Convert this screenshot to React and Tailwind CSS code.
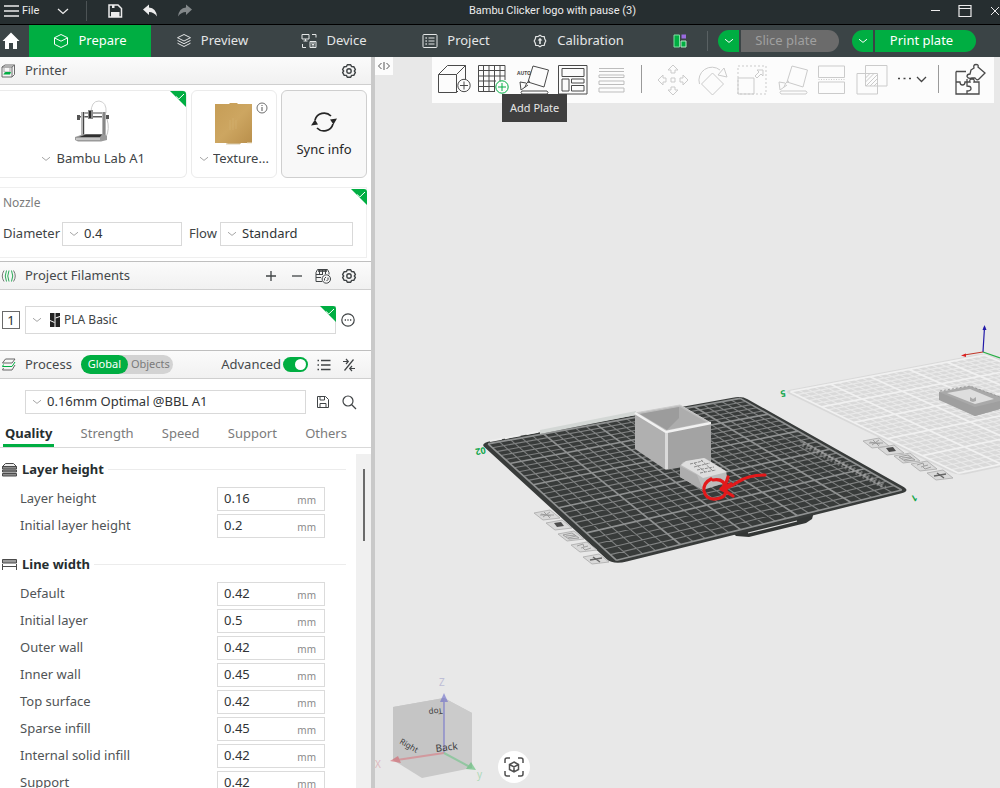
import { useState } from "react";
import clsx from "clsx";

const TABS = ["Prepare", "Preview", "Device", "Project", "Calibration"];
const PROCESS_TABS = ["Quality", "Strength", "Speed", "Support", "Others"];

const GROUPS = [
	{
		title: "Layer height",
		icon: "layers",
		fields: [
			["Layer height", "0.16"],
			["Initial layer height", "0.2"],
		],
	},
	{
		title: "Line width",
		icon: "line",
		fields: [
			["Default", "0.42"],
			["Initial layer", "0.5"],
			["Outer wall", "0.42"],
			["Inner wall", "0.45"],
			["Top surface", "0.42"],
			["Sparse infill", "0.45"],
			["Internal solid infill", "0.42"],
			["Support", "0.42"],
		],
	},
];

/* ---------- small icons ---------- */

const Svg = ({ size = 16, className, children, ...rest }) => (
	<svg
		width={size}
		height={size}
		viewBox={`0 0 ${size} ${size}`}
		fill="none"
		stroke="currentColor"
		className={clsx("shrink-0", className)}
		aria-hidden="true"
		{...rest}
	>
		{children}
	</svg>
);

const Chevron = ({ className }) => (
	<svg width="10" height="6" viewBox="0 0 10 6" fill="none" stroke="currentColor" className={clsx("shrink-0", className)}>
		<path d="M1 1.2 L5 4.4 L9 1.2" />
	</svg>
);

const GearIcon = () => (
	<Svg strokeWidth="1.4">
		<path d="M6.3 1.8 H9.7 L10.6 3.6 L12.8 3.7 L14.4 6.6 L13.3 8 L14.4 9.4 L12.8 12.3 L10.6 12.4 L9.7 14.2 H6.3 L5.4 12.4 L3.2 12.3 L1.6 9.4 L2.7 8 L1.6 6.6 L3.2 3.7 L5.4 3.6 Z" strokeLinejoin="round" />
		<circle cx="8" cy="8" r="2.2" />
	</Svg>
);

const tabIcons = {
	Prepare: (
		<Svg>
			<path d="M8 1.5 L14.5 4.7 V11.3 L8 14.5 L1.5 11.3 V4.7 Z M1.5 4.9 L8 8.2 L14.5 4.9" />
		</Svg>
	),
	Preview: (
		<Svg>
			<path d="M8 1.5 L14.5 4.7 L8 8 L1.5 4.7 Z M1.5 7.4 L8 10.7 L14.5 7.4 M1.5 10.2 L8 13.5 L14.5 10.2" />
		</Svg>
	),
	Device: (
		<Svg>
			<path d="M1 1.5 H8 V6 H1 Z M4.5 6 V8 M2.5 8 H6.5 M11 1.5 H15 V4.5 M1.5 11 V14.5 H5 M9 8.5 H15 V14.5 H9 Z M11 8.5 V11.5 H13 V8.5 M10.5 13 H13.5" />
		</Svg>
	),
	Project: (
		<Svg>
			<rect x="1" y="1.5" width="14" height="13" rx="1" />
			<path d="M6.5 5 H12.5 M6.5 8 H12.5 M6.5 11 H12.5" />
			<path d="M3.5 5 H4.8 M3.5 8 H4.8 M3.5 11 H4.8" strokeWidth="1.4" />
		</Svg>
	),
	Calibration: (
		<Svg>
			<path d="M8 2.2 L9.8 3.5 L12.2 3.6 L12.8 6 L13.8 8 L12.8 10 L12.2 12.4 L9.8 12.5 L8 13.8 L6.2 12.5 L3.8 12.4 L3.2 10 L2.2 8 L3.2 6 L3.8 3.6 L6.2 3.5 Z" strokeWidth="1.2" />
			<path d="M8 11 V6.5" strokeWidth="1.6" />
			<path d="M5.6 7.6 L8 4.8 L10.4 7.6 Z" fill="currentColor" stroke="none" />
		</Svg>
	),
};

// Green corner with a tick that marks a synced card
const SyncedCorner = ({ className }) => (
	<svg width="16" height="16" viewBox="0 0 16 16" className={clsx("absolute", className)} aria-hidden="true">
		<path d="M0 0 H13 Q16 0 16 3 V16 Z" fill="#00ae42" />
		<path d="M6 5.5 L8.8 8 L14 3" fill="none" stroke="#fff" />
	</svg>
);

const PrinterPicture = () => (
	<svg width="36" height="44" viewBox="0 0 36 44" fill="none" aria-hidden="true">
		<path d="M16 14 Q16 2 24 2 Q32 3 31 14" stroke="#cfcfcf" strokeWidth="1" />
		<path d="M32 20 Q35 30 31 38" stroke="#c4c4c4" strokeWidth="1" />
		<path d="M7 13 H31 V15 H7 Z" fill="#a5a5a5" />
		<path d="M3 17 H33 V18.5 H3 Z" fill="#5b5b5b" />
		<path d="M6 13 H9.5 V37 H6 Z" fill="#b5b5b5" />
		<path d="M8 13 H9 V37 H8 Z" fill="#444" />
		<path d="M27 13 H31 V40 H27 Z" fill="#b5b5b5" />
		<path d="M28.5 13 H29.5 V39 H28.5 Z" fill="#5a5a5a" />
		<path d="M13 11 H18 V20 H13 Z" fill="#8a8a8a" />
		<path d="M14 12 H16 V19 H14 Z" fill="#2c2c2c" />
		<path d="M2 16 H5 V21 H2 Z M31 16 H34 V20 H31 Z" fill="#555" />
		<path d="M0 38 L9 35 H28 L32 37 V41 L26 42.5 H3 L0 41 Z" fill="#9a9a9a" />
		<path d="M4 38 L11 35.5 H27 L25 38 Z" fill="#2f2f2f" />
		<path d="M1 40 H25" stroke="#f0f0f0" />
	</svg>
);

const PlatePicture = () => (
	<svg width="40" height="43" viewBox="0 0 40 43" aria-hidden="true">
		<defs>
			<linearGradient id="gold" x1="0" y1="0" x2="1" y2="1">
				<stop offset="0" stopColor="#c69d56" />
				<stop offset="0.5" stopColor="#cda661" />
				<stop offset="1" stopColor="#b98f4b" />
			</linearGradient>
		</defs>
		<path d="M1 2 H15 L16 1 H23 L24 2 H38 V41 H27 L26 42 H14 L12 41 H1 Z" fill="url(#gold)" />
		<path d="M12 42 H26" stroke="#d9cdb2" />
		<path d="M33 41 H38" stroke="#efe4cc" />
		<path d="M16 18 V28 M19 16 V28 M22 18 V27" stroke="#d4b274" strokeWidth="0.6" />
	</svg>
);

/* ---------- sidebar ---------- */

const SectionHeader = ({ icon, title, children }) => (
	<div className="flex h-7 shrink-0 items-center border-b border-[#cfcfcf] bg-linear-to-b from-[#fbfbfb] to-[#f1f1f1] pr-3.5 pl-px text-[#45494b]">
		{icon}
		<h2 className="ml-2 text-[13px]">{title}</h2>
		{children}
	</div>
);

const IconButton = ({ label, className, children }) => (
	<button type="button" aria-label={label} title={label} className={clsx("flex items-center justify-center text-[#404446]", className)}>
		{children}
	</button>
);

const Picker = ({ id, label, value, className }) => (
	<div className={clsx("flex h-6 items-center border border-[#d9d9d9] bg-white pl-1.5", className)}>
		<Chevron className="text-[#a6a6a6]" />
		<select id={id} aria-label={label} className="ml-[5px] min-w-0 flex-1 appearance-none bg-transparent text-[13px] text-[#303436] outline-none">
			<option>{value}</option>
		</select>
	</div>
);

const PrinterSection = () => (
	<section>
		<SectionHeader
			title="Printer"
			icon={
				<Svg>
					<path d="M1 4 L4 2 H13.5 V11.5 L11 14 H1 Z M1 4 H11 V14 M11 4 L13.5 2" stroke="#6b6b6b" />
					<path d="M3 4 V9 H9 V4" stroke="#a9a9a9" />
					<path d="M2.5 11 L4.5 9 H10 L9 11.5 H2.5 Z" fill="#00ae42" stroke="none" />
				</Svg>
			}
		>
			<IconButton label="Printer settings" className="ml-auto">
				<GearIcon />
			</IconButton>
		</SectionHeader>

		<div className="mt-[5px] flex h-[88px] gap-1 pr-1">
			<div className="relative flex flex-1 flex-col items-center rounded-r-md border border-l-0 border-[#ebebeb] pt-2">
				<SyncedCorner className="top-0 right-0" />
				<PrinterPicture />
				<label className="mt-1.5 flex items-center gap-1.5 text-[13px] text-[#404446]">
					<Chevron className="text-[#a6a6a6]" />
					<select aria-label="Printer" className="appearance-none bg-transparent outline-none">
						<option>Bambu Lab A1</option>
					</select>
				</label>
			</div>
			<div className="relative flex w-[86px] flex-col items-center rounded-md border border-[#ebebeb] pt-[11px]">
				<PlatePicture />
				<Svg size={12} className="absolute top-[11px] right-2 text-[#707070]">
					<circle cx="6" cy="6" r="5" />
					<path d="M6 5 V9 M6 3 V4" strokeWidth="1.2" />
				</Svg>
				<label className="mt-1 flex items-center gap-1 text-[13px] text-[#404446]">
					<Chevron className="text-[#a6a6a6]" />
					<select aria-label="Plate type" className="appearance-none bg-transparent outline-none">
						<option>Texture...</option>
					</select>
				</label>
			</div>
			<button type="button" className="flex w-[86px] flex-col items-center justify-center gap-1 rounded-md border border-[#cfcfcf] bg-[#f8f8f8] text-[13px] text-[#262626]">
				<Svg size={28} strokeWidth="1.7">
					<path d="M5 12 A9.5 9.5 0 0 1 21 8 M23 16 A9.5 9.5 0 0 1 7 20" />
					<path d="M1 17.5 L5 11.5 L8 16.5 Z M20 11.5 L27 10.5 L23.5 16.5 Z" fill="currentColor" stroke="none" />
				</Svg>
				Sync info
			</button>
		</div>

		<div className="relative mt-[9px] mr-1 h-[71px] border border-l-0 border-[#efefef]">
			<SyncedCorner className="top-px -right-px" />
			<p className="mt-[7px] ml-[3px] text-xs text-[#7b7b7b]">Nozzle</p>
			<div className="mt-[11px] flex items-center pr-[13px] pl-[3px] text-[13px] text-[#404446]">
				<label htmlFor="diameter" className="w-[59px]">Diameter</label>
				<Picker id="diameter" value="0.4" className="w-[120px]" />
				<label htmlFor="flow" className="ml-[7px] w-[31px]">Flow</label>
				<Picker id="flow" value="Standard" className="min-w-0 flex-1" />
			</div>
		</div>
	</section>
);

const FilamentSection = () => (
	<section className="mt-[3px] border-t border-[#bfbfbf]">
		<SectionHeader
			title="Project Filaments"
			icon={
				<Svg>
					<path d="M3 2.5 Q-0.5 8 3 13.5 M12.5 2.5 Q16 8 12.5 13.5" stroke="#777" />
					<path d="M5.5 2.5 Q3 8 5.5 13.5 M8 2.5 Q5.5 8 8 13.5 M10.5 2.5 Q13 8 10.5 13.5" stroke="#2aa957" />
				</Svg>
			}
		>
			<div className="ml-auto flex items-center gap-[10px]">
				<IconButton label="Add filament">
					<Svg strokeWidth="1.3"><path d="M8 3 V13 M3 8 H13" /></Svg>
				</IconButton>
				<IconButton label="Remove filament">
					<Svg strokeWidth="1.3"><path d="M3 8 H13" /></Svg>
				</IconButton>
				<IconButton label="Sync AMS filaments">
					<Svg>
						<path d="M7 13.5 H1 V4.5 L2.5 1.5 H12.5 L14 4.5 V6.5 M1 6.5 H8 M4.5 2 V6 M7.5 2 V6 M10.5 2 V6 M1 9.5 H6" />
						<path d="M3 3 H12" strokeWidth="1.6" />
						<circle cx="11.3" cy="11" r="4.2" />
						<path d="M9.5 12.5 V10.5 L11 9 M13 9.5 V11.5 L11.5 13" />
					</Svg>
				</IconButton>
				<IconButton label="Filament settings">
					<GearIcon />
				</IconButton>
			</div>
		</SectionHeader>
		<div className="flex items-center pt-4 pr-[15px] pb-4 pl-0.5">
			<button type="button" className="size-[18px] border border-[#6a6a6a] text-[13px] leading-4 text-[#262e30]">1</button>
			<div className="relative ml-[5px] flex h-7 flex-1 items-center border border-[#d9d9d9] pl-1.5">
				<Chevron className="text-[#a6a6a6]" />
				<svg width="10" height="14" viewBox="0 0 10 14" className="ml-2" aria-hidden="true">
					<path d="M0 0 H4.5 V14 H0 Z M5.5 0 H10 V14 H5.5 Z" fill="#222" />
					<path d="M0 7.5 L4.5 9.5 M5.5 5 L10 3.5" stroke="#fff" />
				</svg>
				<select aria-label="Filament 1" className="ml-1 flex-1 appearance-none bg-transparent text-xs text-[#404446] outline-none">
					<option>PLA Basic</option>
				</select>
				<SyncedCorner className="-top-px -right-px" />
			</div>
			<IconButton label="More" className="ml-1">
				<Svg strokeWidth="1.2">
					<circle cx="8" cy="8" r="6.2" />
					<path d="M4.7 8 H6 M7.4 8 H8.6 M10 8 H11.3" strokeWidth="1.4" />
				</Svg>
			</IconButton>
		</div>
	</section>
);

const GroupIcon = ({ name }) =>
	name === "layers" ? (
		<Svg stroke="#4a4a4a">
			<path d="M3.5 1.5 H11.5 L14.5 4.5 H0.5 Z" fill="#eee" />
			<path d="M0.5 4.5 H14.5 V7 H0.5 Z M0.5 8 H14.5 V10 H0.5 Z M0.5 11.5 H14.5 V14 H0.5 Z" fill="#8c8c8c" />
		</Svg>
	) : (
		<Svg stroke="#4a4a4a">
			<path d="M0.5 2.5 H14.5 V6 H0.5 Z" fill="#9a9a9a" />
			<path d="M0.5 7 V13 M14.5 7 V13 M1 9.5 H14" />
		</Svg>
	);

const SettingsGroup = ({ title, icon, fields }) => (
	<section className="mb-2.5">
		<div className="flex h-[31px] items-center pl-0.5">
			<GroupIcon name={icon} />
			<h3 className="ml-1 text-[13px] font-bold text-[#262e30]">{title}</h3>
			<span className="ml-1 h-px flex-1 bg-[#ececec]" />
		</div>
		{fields.map(([label, value]) => {
			const id = `${icon}-${label}`.replaceAll(" ", "-").toLowerCase();
			return (
				<div key={id} className="flex h-[27px] items-center justify-between pr-[21px] pl-5 text-[13px]">
					<label htmlFor={id} className="text-[#505456]">{label}</label>
					<div className="flex h-6 w-[108px] items-center border border-[#dbdbdb] pr-2 pl-1.5">
						<input id={id} defaultValue={value} className="w-0 flex-1 bg-transparent text-[#303436] outline-none" />
						<span className="pt-1 text-[10px] text-[#8a8a8a]">mm</span>
					</div>
				</div>
			);
		})}
	</section>
);

const ProcessSection = () => {
	const [tab, setTab] = useState("Quality");
	const [advanced, setAdvanced] = useState(true);

	return (
		<section className="flex min-h-0 flex-1 flex-col border-t border-[#bfbfbf]">
			<SectionHeader
				title="Process"
				icon={
					<Svg>
						<path d="M4.5 2 H14 L11 6 H1.5 Z" stroke="#666" />
						<path d="M14 5 L11 9.5 H1.5 L2.5 7.5" stroke="#00ae42" />
						<path d="M14 8 L11 13 H1.5 L2.5 11" stroke="#666" />
					</Svg>
				}
			>
				<div className="ml-[9px] flex h-[19px] rounded-full bg-[#d3d3d3] text-[11px]">
					<button type="button" className="w-[47px] rounded-full bg-[#00ae42] text-white">Global</button>
					<button type="button" className="w-[45px] text-[#7a7a7a]">Objects</button>
				</div>
				<label className="ml-auto flex items-center gap-0.5 text-[13px]">
					Advanced
					<input
						type="checkbox"
						checked={advanced}
						onChange={() => setAdvanced(!advanced)}
						className="h-[15px] w-[25px] appearance-none rounded-full bg-[#bdbdbd] p-0.5 before:block before:size-[11px] before:rounded-full before:bg-white checked:bg-[#00ae42] checked:before:ml-2.5"
					/>
				</label>
				<IconButton label="Parameter list" className="ml-2">
					<Svg strokeWidth="1.4"><path d="M5 3.5 H14.5 M5 8 H14.5 M5 12.5 H14.5 M1.5 3.5 H3 M1.5 8 H3 M1.5 12.5 H3" /></Svg>
				</IconButton>
				<IconButton label="Compare presets" className="ml-[9px]">
					<Svg strokeWidth="1.2"><path d="M3.5 13.5 L12.5 2.5 M2 4.5 H7 M5 2 L7.3 4.5 L5 7 M14 11.5 H9 M11 9 L8.7 11.5 L11 14" /></Svg>
				</IconButton>
			</SectionHeader>

			<div className="mt-[11px] flex items-center pr-3.5 pl-[25px]">
				<Picker label="Process preset" value="0.16mm Optimal @BBL A1" className="min-w-0 flex-1" />
				<IconButton label="Save preset" className="ml-[9px]">
					<Svg><path d="M2.5 2.5 H10.5 L13.5 5.5 V13.5 H2.5 Z M5 2.5 V6 H9.5 V2.5 M5 13.5 V9.5 H11 V13.5" /></Svg>
				</IconButton>
				<IconButton label="Search" className="ml-[10px]">
					<Svg strokeWidth="1.2"><circle cx="7" cy="7" r="5" /><path d="M10.5 10.5 L15 15" /></Svg>
				</IconButton>
			</div>

			<div role="tablist" className="mt-1.5 flex h-7 shrink-0 justify-between border-b border-[#d9d9d9] pr-[22px] pl-[3px] text-[13px]">
				{PROCESS_TABS.map((name) => (
					<button
						key={name}
						type="button"
						role="tab"
						aria-selected={tab === name}
						onClick={() => setTab(name)}
						className={clsx(
							"border-b-[3px] px-0.5 pt-1",
							tab === name ? "border-[#00ae42] font-bold text-[#262e30]" : "border-transparent text-[#7b7b7b]"
						)}
					>
						{name}
					</button>
				))}
			</div>

			<div className="mt-1.5 flex min-h-0 flex-1 overflow-hidden">
				<div className="mr-2.5 min-w-0 flex-1">
					{GROUPS.map((group) => (
						<SettingsGroup key={group.title} {...group} />
					))}
				</div>
				<div className="flex w-[15px] justify-center bg-[#f0f0f0] pt-[15px]">
					<span className="h-[72px] w-0.5 bg-[#6b6b6b]" />
				</div>
			</div>
		</section>
	);
};

/* ---------- viewport ---------- */

// Maps the unit square onto a quad given as [p00, p10, p11, p01]
const projector = ([[x0, y0], [x1, y1], [x2, y2], [x3, y3]]) => {
	const dx1 = x1 - x2, dx2 = x3 - x2, dx3 = x0 - x1 + x2 - x3;
	const dy1 = y1 - y2, dy2 = y3 - y2, dy3 = y0 - y1 + y2 - y3;
	const det = dx1 * dy2 - dx2 * dy1;
	const g = (dx3 * dy2 - dx2 * dy3) / det;
	const h = (dx1 * dy3 - dx3 * dy1) / det;
	return (u, v) => {
		const w = g * u + h * v + 1;
		const x = ((x1 - x0 + g * x1) * u + (x3 - x0 + h * x3) * v + x0) / w;
		const y = ((y1 - y0 + g * y1) * u + (y3 - y0 + h * y3) * v + y0) / w;
		return `${x.toFixed(1)} ${y.toFixed(1)}`;
	};
};

const CELLS = 25;

const PlateGrid = ({ corners, fill, line, bold, lineWidth }) => {
	const p = projector(corners);
	const r = 0.04;
	const outline = `M${p(r, 0)} L${p(1 - r, 0)} Q${p(1, 0)} ${p(1, r)} L${p(1, 1 - r)} Q${p(1, 1)} ${p(1 - r, 1)} L${p(r, 1)} Q${p(0, 1)} ${p(0, 1 - r)} L${p(0, r)} Q${p(0, 0)} ${p(r, 0)} Z`;
	const path = (test) => {
		let d = "";
		for (let i = 0; i <= CELLS; i++) {
			if (!test(i)) continue;
			const t = 0.02 + (i / CELLS) * 0.96;
			d += `M${p(t, 0.02)} L${p(t, 0.98)} M${p(0.02, t)} L${p(0.98, t)} `;
		}
		return d;
	};
	return (
		<g fill="none">
			<path d={outline} fill={fill} />
			<path d={path((i) => i % 5 !== 0)} stroke={line} strokeWidth={lineWidth} />
			<path d={path((i) => i % 5 === 0)} stroke={bold} strokeWidth={lineWidth * 1.5} />
		</g>
	);
};

const PlateButtons = ({ at }) => (
	<g stroke="#b0b0b0" strokeWidth="0.9" fill="none">
		{at.map(([x, y], i) => (
			<g key={i} transform={`translate(${x} ${y})`}>
				<path d="M-13 -2 L3 -5 L13 3 L-4 5 Z" fill="#d9d9d9" />
				{i === 0 && <path d="M-6 -1 L4 1 M-4 2 L3 -3 M-3 -3 L3 3 M-7 0 L7 0" stroke="#999" />}
				{i === 1 && <path d="M-5 -2 L2 -3 L5 1 L-2 2 Z" fill="#4d4d4d" stroke="none" />}
				{i === 2 && <path d="M-8 -1 L1 -3 L8 2 L-2 3 Z M-5 0 L4 -1 M-3 2 L5 0" stroke="#999" />}
				{i === 3 && <path d="M-7 -1 L-1 -3 L0 0 M7 1 L1 3 L-1 1 M-3 1 L4 -1" stroke="#999" />}
				{i === 4 && <path d="M-6 1 L6 -1 M-3 -2 L4 3" stroke="#666" strokeWidth="1.4" />}
			</g>
		))}
	</g>
);

const Scene = () => (
	<svg viewBox="375 57 625 731" preserveAspectRatio="xMinYMin slice" className="absolute inset-0 h-full w-full" aria-label="Plate view" role="img">
		{/* second plate */}
		<PlateGrid corners={[[783, 391], [985, 353], [1172, 430], [958, 476]]} fill="#d9d9d9" line="#e9e9e9" bold="#f1f1f1" lineWidth={1.2} />
		<PlateButtons at={[[876, 443], [891, 450], [907, 458], [924, 466], [940, 475]]} />
		<path d="M939 392 L970 386 L1004 398 V408 L975 416 L939 399 Z" fill="#a9a9a9" />
		<path d="M947 393 L970 389 L994 399 L975 404 Z" fill="#dedede" />
		<path d="M939 392 L975 407 L1004 400 V408 L975 416 L939 400 Z" fill="#9f9f9f" />
		<path d="M970 397 L973 399 L976 397 V401 L973 402 L970 401 Z" fill="#aaa" />
		<path d="M940 391 L970 386 L1000 397" fill="none" stroke="#999" strokeDasharray="2 2" />
		<g strokeWidth="1.2" fill="none">
			<path d="M983 352 L984.5 327" stroke="#2119a8" />
			<path d="M983 352 L964 355" stroke="#c0392b" />
			<path d="M983 352 L1000 358" stroke="#27ae45" />
		</g>
		<path d="M984.5 325 L986.5 330 H982.5 Z" fill="#2119a8" />
		<path d="M961 355.5 L966 353.5 V357 Z" fill="#d22" />

		{/* active plate */}
		<path d="M732 532 L736 536 L749 537 L806 523 L812 519 L814 512 Z" fill="#333635" />
		<PlateGrid corners={[[480, 443], [742, 396], [911, 491], [613, 565]]} fill="#383b3a" line="#7f8181" bold="#8f9191" lineWidth={1.1} />
		<path d="M748 533 L797 521" stroke="#ddd" strokeWidth="1.2" />
		<path d="M490 441 L545 430.5" stroke="#ededed" strokeWidth="2" strokeDasharray="12 3 16 6" />
		<path d="M540 430 L636 411 L636 415 L540 434 Z" fill="#d3d7d5" />
		<path d="M803 444 L884 486" stroke="#aaa" strokeWidth="6" strokeDasharray="2 2" opacity="0.45" />
		<path d="M800 441 L886 487" stroke="#c4c4c4" strokeWidth="2" strokeDasharray="5 3" opacity="0.4" />
		<PlateButtons at={[[547, 515], [559, 525], [571, 536], [584, 547], [596, 559]]} />

		<g fill="#0fa64b" fontSize="9" fontWeight="bold" fontFamily="Noto Sans, sans-serif">
			<text transform="translate(485 447) rotate(170)">02</text>
			<text transform="translate(785 390) rotate(170)">5</text>
			<text transform="translate(915 494) rotate(150)">1</text>
		</g>

		{/* box */}
		<path d="M635 413 L666 432 V470 L635 449 Z" fill="#b0b0b0" />
		<path d="M666 432 L711 423 V462 L666 470 Z" fill="#a3a3a3" />
		<path d="M635 413 L680 405 L711 423 L666 432 Z" fill="#bcbcbc" />
		<path d="M680 407 L706 422 L667 430 L640 414 Z" fill="#adadad" />
		<path d="M679 407 V418 L667 430 L640 414 Z" fill="#9c9c9c" />
		<path d="M635 413 L680 405 L711 423" fill="none" stroke="#cdcdcd" strokeLinejoin="round" />
		<path d="M635 413 L666 432 L711 423" fill="none" stroke="#f1f1f1" strokeWidth="2.4" strokeLinejoin="round" />
		<path d="M666.5 433 V469" stroke="#dadada" strokeWidth="3" />

		{/* clicker */}
		<path d="M680 466 L683 462 L705 458 L726 471 L728 482 L703 490 L680 477 Z" fill="#bcbcbc" />
		<path d="M681 465 L686 461 L704 458 L727 472 L703 478 L697 474 Z" fill="#dedede" />
		<path d="M680 466 L697 475 L703 490 L680 477 Z" fill="#adadad" />
		<path d="M690 464 L703 461 M694 467 L710 463 M697 470 L714 467 M700 473 L716 470 M694 463 L705 472 M701 460 L713 471" stroke="#8b8b8b" strokeDasharray="3 1" />

		<g fill="none" stroke="#e3191b" strokeWidth="3.2" strokeLinecap="round" strokeLinejoin="round">
			<path d="M711 479 Q703 483 704 491 Q706 500 716 499 Q727 498 726 488 Q724 478 713 480" />
			<path d="M765 475 Q748 475 738 482 Q730 487 724 489 M728 477 Q726 485 721 489 Q727 492 733 496 M722 489 L731 484" />
		</g>

		{/* orientation cube */}
		<path d="M393 707 L444 698 L472 713 V768 L422 778 L393 760 Z" fill="#c9c9c9" />
		<path d="M393 707 L444 698 V753 L393 760 Z" fill="#c5c5c5" />
		<path d="M444 698 L472 713 V768 L444 753 Z" fill="#cbcbcb" />
		<g strokeWidth="2" opacity="0.6">
			<path d="M444 753 V702" stroke="#7f7fcb" />
			<path d="M444 753 L397 760" stroke="#d97b83" />
			<path d="M444 753 L470 767" stroke="#6fc588" />
			<path d="M444 693 L448 702 H440 Z" fill="#6969c9" stroke="none" />
			<path d="M390 761 L398 756 L401 763 Z" fill="#d55f69" stroke="none" />
			<path d="M476 770 L466 769 L471 762 Z" fill="#55bd70" stroke="none" />
		</g>
		<g fontFamily="Noto Sans, sans-serif" fontSize="10" fill="#3d3d3d">
			<text transform="translate(436 752) rotate(-7)">Back</text>
			<text transform="translate(399 743) rotate(30)" fontSize="8">Right</text>
			<text transform="translate(442 708) rotate(172)" fontSize="8">Top</text>
			<text x="439" y="686" fill="#bebed6">Z</text>
			<text x="375" y="768" fill="#deb9bd">X</text>
			<text x="477" y="778" fill="#aed9b9">y</text>
		</g>
	</svg>
);

const AutoArrow = () => <path d="M12 18 Q8 19 7 24 M2 19 L3 27 L10 22 M2 19 L8 20" />;

const TOOLS = [
	{
		label: "Add model",
		icon: (
			<>
				<path d="M0.5 11.5 H18.5 V29.5 H0.5 Z M0.5 11.5 L9.5 2.5 H27.5 L18.5 11.5 M27.5 2.5 V16 M18.5 29.5 L20 28" />
				<circle cx="26" cy="22.5" r="6.2" />
				<path d="M22 22.5 H30 M26 18.5 V26.5" />
			</>
		),
	},
	{
		label: "Add plate",
		tooltip: "Add Plate",
		icon: (
			<>
				<path d="M0.5 2.5 H27 V17 M0.5 2.5 V28.5 H17 M5.5 2.5 V28.5 M11 2.5 V28.5 M16.5 2.5 V28.5 M22 2.5 V18 M0.5 7.5 H27 M0.5 13 H27 M0.5 18 H18 M0.5 23.5 H17" />
				<circle cx="24" cy="24" r="6.2" stroke="#00ae42" fill="#fcfcfc" />
				<path d="M20 24 H28 M24 20 V28" stroke="#00ae42" />
			</>
		),
	},
	{
		label: "Auto orient",
		icon: (
			<>
				<text x="-1" y="12" fontSize="5" fontWeight="bold" fontFamily="Noto Sans, sans-serif" fill="currentColor" stroke="none">AUTO</text>
				<path d="M15 3 L30.5 7 L26 24 L10 19 Z M4 28 H29 L30 29.5 L29 31 H4 L3 29.5 Z" />
				<AutoArrow />
			</>
		),
	},
	{
		label: "Arrange",
		icon: <path d="M0.5 2.5 H29 V31 H0.5 Z M4 5.5 H26 V13.5 H4 Z M4 16 H11 V28 H4 Z M13.5 16 H26 V20 H13.5 Z M13.5 22.5 H26 V28 H13.5 Z" />,
	},
	{
		label: "Variable layer height",
		muted: true,
		icon: <path d="M1 5.5 H26 M1 8.5 H26 M1 12 H26 V14.5 H1 Z M1 18 H26 V21.5 H1 Z M1 25 H26 V29 H1 Z" />,
	},
	{ divider: true },
	{
		label: "Move",
		disabled: true,
		icon: <path d="M14 15 H18 V19 H14 Z M16 2 L21 7 H18 V10 H14 V7 H11 Z M16 32 L21 27 H18 V24 H14 V27 H11 Z M1 17 L6 12 V15 H9 V19 H6 V22 Z M31 17 L26 12 V15 H23 V19 H26 V22 Z" />,
	},
	{
		label: "Rotate",
		disabled: true,
		icon: <path d="M15.5 10 L26.5 21 L15.5 32 L4.5 21 Z M2.5 21 A13 13 0 0 1 23 7 M27 5 L30 14 L21 12 Z" />,
	},
	{
		label: "Scale",
		disabled: true,
		icon: (
			<>
				<path d="M1 3 H29 V31 H1 Z" strokeDasharray="2 2" />
				<path d="M1 15 H17 V31 H1 Z M18 13 L22 9 L20 7 H26 V13 L24 11 L20 15 Z" />
			</>
		),
	},
	{
		label: "Lay on face",
		disabled: true,
		icon: (
			<>
				<path d="M15 3 L30.5 7 L26 24 L10 19 Z M4 28 H29 L30 29.5 L29 31 H4 L3 29.5 Z" />
				<AutoArrow />
			</>
		),
	},
	{
		label: "Cut",
		disabled: true,
		icon: (
			<>
				<path d="M1.5 3 H27.5 V14.5 H1.5 Z M1.5 19 H27.5 V30.5 H1.5 Z" />
				<path d="M1.5 16.5 H28" strokeDasharray="1 1.5" />
			</>
		),
	},
	{
		label: "Mesh boolean",
		disabled: true,
		icon: <path d="M8.5 2.5 H30 V23 H8.5 Z M0 10.5 H20.5 V31 H0 Z M8.5 15 L13 10.5 M8.5 19 L17 10.5 M9 23 L20.5 11.5 M13 23 L20.5 15.5 M17 23 L20.5 19.5" />,
	},
	{ more: true },
	{ divider: true },
	{
		label: "Assembly view",
		icon: (
			<path
				strokeWidth="1.3"
				d="M2 8.5 H12 M2 8.5 V31 H25 V19 H20 Q21 16 18 16 Q15 16 16 19 H13 M2 19 H6 Q6 22 8.5 22 Q11 22 11 19 H13 V23 Q17 23 17 25.5 Q17 28 13 28 V31 M13 19 V16 M17 7 L20 5 Q19 1.5 22 1.5 Q25 1.5 24 4 L31 10 L25 16 Q23 18 21 15 L18 15 Q14 16 13 13.5 Q13 11 16 11 Z"
			/>
		),
	},
];

const Toolbar = () => (
	<div role="toolbar" className="relative mr-1.5 ml-auto flex h-[46px] items-center bg-[#fcfcfc] pr-1 pb-0.5 pl-0.5">
		{TOOLS.map((tool, i) => {
			if (tool.divider) return <span key={i} className="mr-[11px] ml-[7px] h-7 w-px bg-[#9a9a9a]" />;
			if (tool.more)
				return (
					<button key={i} type="button" aria-label="More tools" className="flex w-[38px] items-center justify-center text-[#444]">
						<svg width="30" height="8" viewBox="0 0 30 8" fill="none" stroke="currentColor">
							<path d="M1 3.5 H3 M6.5 3.5 H8.5 M12 3.5 H14" strokeWidth="1.5" />
							<path d="M20 2 L24.5 6.5 L29 2" strokeWidth="1.3" />
						</svg>
					</button>
				);
			return (
				<button
					key={i}
					type="button"
					aria-label={tool.label}
					disabled={tool.disabled}
					className={clsx(
						"relative flex w-10 justify-center",
						tool.disabled ? "text-[#cbcbcb]" : tool.muted ? "text-[#bdbdbd]" : "text-[#4a4a4a]"
					)}
				>
					<Svg size={32} className="overflow-visible">{tool.icon}</Svg>
					{tool.tooltip && (
						<span role="tooltip" className="absolute top-[31px] left-7 z-10 bg-[#3f3f3f] px-2 py-1.5 text-[11px] leading-4 whitespace-nowrap text-[#e6e6e6]">
							{tool.tooltip}
						</span>
					)}
				</button>
			);
		})}
	</div>
);

const Viewport = () => (
	<main className="relative flex min-w-0 flex-1 items-start overflow-hidden bg-[#e8e8e8]">
		<Scene />
		<button type="button" aria-label="Collapse sidebar" className="relative flex size-[18px] items-center justify-center bg-[#fcfcfc] text-[#555]">
			<Svg size={12}><path d="M3.5 3 L0.5 6 L3.5 9 M6 2 V10 M8.5 3 L11.5 6 L8.5 9" /></Svg>
		</button>
		<Toolbar />
		<button type="button" aria-label="Fit view" className="absolute bottom-[5px] left-[123px] flex size-8 items-center justify-center rounded-full bg-white text-[#505050]">
			<Svg size={20} strokeWidth="1.5">
				<path d="M1 6 V3 Q1 1 3 1 H6 M14 1 H17 Q19 1 19 3 V6 M19 14 V17 Q19 19 17 19 H14 M6 19 H3 Q1 19 1 17 V14" />
				<path d="M10 5 L14.5 7.5 V12.5 L10 15 L5.5 12.5 V7.5 Z M5.5 7.5 L10 10 L14.5 7.5 M10 10 V15" />
			</Svg>
		</button>
	</main>
);

/* ---------- window chrome ---------- */

const TitleBar = () => (
	<header className="grid h-[25px] shrink-0 grid-cols-3 items-center border-b border-black bg-[#262e30] pb-0.5 font-[Roboto,sans-serif] text-[11px] text-[#ececec]">
		<div className="flex items-center">
			<button type="button" className="ml-1 flex items-center gap-0.5">
				<Svg strokeWidth="1.3"><path d="M0 3 H15 M0 8 H15 M0 13 H15" /></Svg>
				File
			</button>
			<button type="button" aria-label="Menu" className="ml-[18px]">
				<svg width="12" height="7" viewBox="0 0 12 7" fill="none" stroke="currentColor" strokeWidth="1.3"><path d="M1 1 L6 5.5 L11 1" /></svg>
			</button>
			<span className="ml-[17px] h-5 w-px bg-[#4c5355]" />
			<button type="button" aria-label="Save" className="ml-5">
				<Svg strokeWidth="1.5">
					<path d="M2 2 H11 L14.5 5.5 V14 H2 Z" />
					<path d="M4 9 H12.5 V14 H4 Z M5 2 H7.5 V5 H5 Z" fill="currentColor" stroke="none" />
				</Svg>
			</button>
			<button type="button" aria-label="Undo" className="ml-[19px]">
				<Svg><path d="M1 6.5 L7 1.5 V4.5 Q14 5 15 13.5 Q12 9 7 9 V12 Z" fill="currentColor" stroke="none" /></Svg>
			</button>
			<button type="button" aria-label="Redo" className="ml-[19px] text-[#83888a]">
				<Svg><path d="M15 6.5 L9 1.5 V4.5 Q2 5 1 13.5 Q4 9 9 9 V12 Z" fill="currentColor" stroke="none" /></Svg>
			</button>
		</div>
		<h1 className="ml-[105px] justify-self-center whitespace-nowrap">Bambu Clicker logo with pause (3)</h1>
		<div className="flex items-center justify-end gap-4 overflow-hidden">
			<button type="button" aria-label="Minimize"><Svg size={12}><path d="M1 5.5 H10" /></Svg></button>
			<button type="button" aria-label="Maximize"><Svg size={14}><path d="M1 1.5 H13 V12.5 H1 Z M1 4.5 H13" strokeWidth="1.2" /></Svg></button>
			<button type="button" aria-label="Close" className="-mr-0.5"><Svg size={14}><path d="M3 3 L11 11 M11 3 L3 11" /></Svg></button>
		</div>
	</header>
);

const SplitButton = ({ label, disabled, className }) => (
	<div className={clsx("flex h-[22px] gap-0.5 text-[13px]", className)}>
		<button type="button" aria-label={`${label} options`} className="flex w-[21px] items-center justify-center rounded-l-full bg-[#00ae42] text-white">
			<Chevron />
		</button>
		<button
			type="button"
			disabled={disabled}
			className={clsx("flex-1 rounded-r-full pr-2", disabled ? "bg-[#6b6b6b] text-[#a0a0a0]" : "bg-[#00ae42] text-white")}
		>
			{label}
		</button>
	</div>
);

const NavBar = () => {
	const [active, setActive] = useState("Prepare");
	return (
		<nav className="flex h-8 shrink-0 items-center bg-[#3b4446] text-[13px] text-[#e4e6e6]">
			<button type="button" aria-label="Home" className="flex w-[29px] pl-0.5 text-white">
				<Svg size={18}><path d="M9 0.5 L17.5 9 H15 V17 H11 V11 H7 V17 H3 V9 H0.5 Z" fill="currentColor" stroke="none" /></Svg>
			</button>
			{TABS.map((name) => (
				<button
					key={name}
					type="button"
					onClick={() => setActive(name)}
					className={clsx("flex h-full w-[122px] items-center justify-center gap-[9px]", active === name && "bg-[#00ae42] text-white")}
				>
					{tabIcons[name]}
					{name}
				</button>
			))}
			<button type="button" aria-label="Layout" className="ml-auto">
				<svg width="14" height="14" viewBox="0 0 14 14" fill="none">
					<path d="M1 1 H6.5 V13 H1 Z" fill="#00ae42" stroke="#7fe0a2" />
					<path d="M8.5 0.5 H13 V4.5 H8.5 Z" fill="#9a6be0" />
					<path d="M8 7 H13 V13 H8 Z" fill="#00ae42" stroke="#b4ecc7" />
				</svg>
			</button>
			<span className="ml-5 h-5 w-px bg-[#596163]" />
			<SplitButton label="Slice plate" disabled className="ml-2.5 w-[121px]" />
			<SplitButton label="Print plate" className="mr-6 ml-[13px] w-[124px]" />
		</nav>
	);
};

export default function App() {
	return (
		<div className="flex h-screen flex-col overflow-hidden bg-white font-['Noto_Sans',sans-serif]">
			<TitleBar />
			<NavBar />
			<div className="flex min-h-0 flex-1">
				<aside className="flex w-[375px] shrink-0 flex-col border-r-4 border-[#c9c9c9] bg-white">
					<PrinterSection />
					<FilamentSection />
					<ProcessSection />
				</aside>
				<Viewport />
			</div>
		</div>
	);
}
